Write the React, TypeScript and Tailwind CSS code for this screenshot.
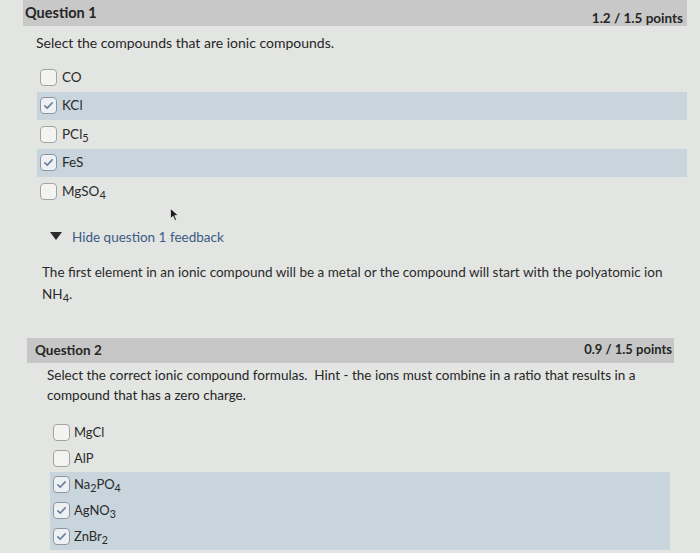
import React from 'react';

type Opt = { label: React.ReactNode; checked?: boolean };

function Sub({ children }: { children: React.ReactNode }) {
  return <span className="relative top-[0.32em] text-[0.82em]">{children}</span>;
}

function Box({ checked }: { checked?: boolean }) {
  return (
    <span
      className={`flex h-[17px] w-[17px] shrink-0 items-center justify-center rounded-[4px] border ${
        checked ? 'border-[#8c96a3] bg-[#eef1f4]' : 'border-[#a3a3a3] bg-[#f3f4f2]'
      }`}
    >
      {checked && (
        <svg width="11" height="11" viewBox="0 0 12 12" fill="none">
          <path d="M2 6.4l2.6 2.5L10 3.2" stroke="#6e819b" strokeWidth="1.8" strokeLinecap="round" strokeLinejoin="round" />
        </svg>
      )}
    </span>
  );
}

function Options({ items, rowH, gap, textSize }: { items: Opt[]; rowH: string; gap: string; textSize: string }) {
  return (
    <div className="flex flex-col">
      {items.map((o, i) => (
        <div key={i} className={`flex items-center ${rowH} ${gap} pl-[3px] ${o.checked ? 'bg-[#c9d5dc]' : ''}`}>
          <Box checked={o.checked} />
          <span className={`${textSize} leading-none text-[#2a2a2a]`}>{o.label}</span>
        </div>
      ))}
    </div>
  );
}

export default function App() {
  const q1: Opt[] = [
    { label: 'CO' },
    { label: 'KCl', checked: true },
    { label: <>PCl<Sub>5</Sub></> },
    { label: 'FeS', checked: true },
    { label: <>MgSO<Sub>4</Sub></> },
  ];
  const q2: Opt[] = [
    { label: 'MgCl' },
    { label: 'AlP' },
    { label: <>Na<Sub>2</Sub>PO<Sub>4</Sub></>, checked: true },
    { label: <>AgNO<Sub>3</Sub></>, checked: true },
    { label: <>ZnBr<Sub>2</Sub></>, checked: true },
  ];

  return (
    <div className="relative h-[553px] w-[700px] overflow-hidden bg-[#e3e5e2] font-['Lato','Noto_Sans',sans-serif] text-[#262626]">
      {/* Question 1 */}
      <div className="ml-[23px] mr-[13px]">
        <div className="flex h-[26px] items-center justify-between bg-[#c7c8c7] pl-[2px] pr-[4px]">
          <span className="text-[14.5px] font-bold">Question 1</span>
          <span className="mt-[10px] text-[13.5px] font-bold">1.2 / 1.5 points</span>
        </div>
        <p className="mt-[7px] pl-[13px] text-[14px] leading-[20px]">Select the compounds that are ionic compounds.</p>
        <div className="mt-[10px] ml-[14px]">
          <Options items={q1} rowH="h-[28.5px]" gap="gap-[5px]" textSize="text-[13.5px]" />
        </div>
        <div className="mt-[21px] ml-[27px] flex items-center gap-[10px] text-[13.5px] leading-[20px] text-[#3c5a86]">
          <svg width="12" height="9" viewBox="0 0 12 9">
            <path d="M0 0h12L6 8z" fill="#2b2b2b" />
          </svg>
          <span>Hide question 1 feedback</span>
        </div>
        <p className="mt-[14px] ml-[19px] w-[630px] text-[13.5px] leading-[22px] text-[#2a2a2a]">
          The first element in an ionic compound will be a metal or the compound will start with the polyatomic ion NH<Sub>4</Sub>.
        </p>
      </div>

      {/* Question 2 */}
      <div className="mt-[32px] ml-[27px] mr-[26px]">
        <div className="flex h-[25px] items-center justify-between bg-[#c5c6c5] pl-[8px] pr-[2px]">
          <span className="text-[13.5px] font-bold">Question 2</span>
          <span className="text-[13px] font-bold">0.9 / 1.5 points</span>
        </div>
        <p className="mt-[2px] ml-[20px] mr-[14px] text-[13.5px] leading-[20px]">
          Select the correct ionic compound formulas.&nbsp; Hint - the ions must combine in a ratio that results in a compound that has a zero charge.
        </p>
        <div className="mt-[15px] ml-[23px] mr-[4px]">
          <Options items={q2} rowH="h-[26px]" gap="gap-[4px]" textSize="text-[13px]" />
        </div>
      </div>

      {/* mouse pointer */}
      <svg className="absolute left-[170px] top-[208px]" width="9" height="13" viewBox="0 0 9 13">
        <path d="M0.5 0.5v10l2.6-2.3 1.8 4.2 1.6-.7-1.8-4.1 3.5-.2z" fill="#1c1c1c" stroke="#fff" strokeWidth="0.6" />
      </svg>
    </div>
  );
}
